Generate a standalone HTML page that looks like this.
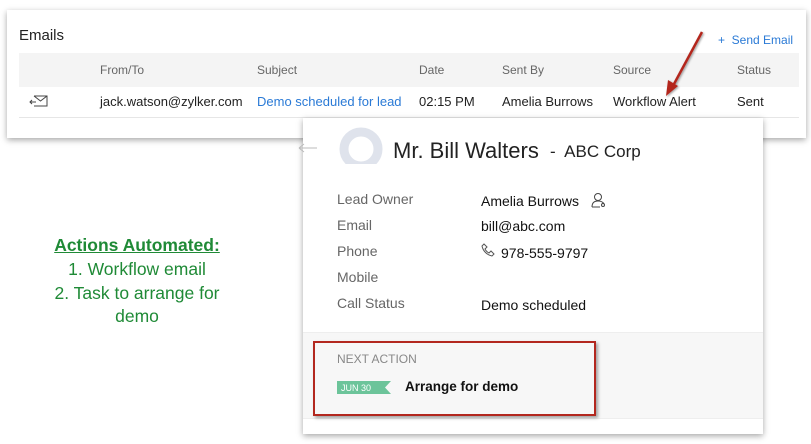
<!DOCTYPE html>
<html><head><meta charset="utf-8"><style>
*{margin:0;padding:0;box-sizing:border-box}
body{width:811px;height:444px;background:#fff;position:relative;overflow:hidden;font-family:"Liberation Sans",sans-serif;color:#222}
.abs{position:absolute;white-space:nowrap}
#card1{position:absolute;left:7px;top:10px;width:799px;height:128px;background:#fff;box-shadow:0 2px 6px rgba(0,0,0,.35)}
#card2{position:absolute;left:303px;top:118px;width:460px;height:316px;background:#fff;box-shadow:0 2px 6px rgba(0,0,0,.35)}
.hdr{font-size:12px;color:#666}
.cell{font-size:13px;color:#222}
.lbl{font-size:14px;color:#666}
.val{font-size:14px;color:#111}
.g{font-size:17.5px;color:#1f8a36;text-align:center;width:240px;left:17px}
</style></head><body>
<div id="card1">
  <div class="abs" style="left:12px;top:17px;font-size:15px;color:#222">Emails</div>
  <div class="abs" style="left:711px;top:23px;font-size:12px;color:#2a7ad6">+&nbsp; Send Email</div>
  <div class="abs" style="left:12px;top:43px;width:780px;height:34px;background:#f4f4f4"></div>
  <div class="abs" style="left:12px;top:107px;width:780px;height:1px;background:#e6e6e6"></div>
  <div class="abs hdr" style="left:93px;top:53px">From/To</div>
  <div class="abs hdr" style="left:250px;top:53px">Subject</div>
  <div class="abs hdr" style="left:412px;top:53px">Date</div>
  <div class="abs hdr" style="left:495px;top:53px">Sent By</div>
  <div class="abs hdr" style="left:606px;top:53px">Source</div>
  <div class="abs hdr" style="left:730px;top:53px">Status</div>
  <svg class="abs" style="left:22px;top:85px" width="20" height="13" viewBox="0 0 20 13"><path d="M5 1h13v10H5M5 1l6.5 5L18 1M1 7h6M3 5L1 7l2 2" fill="none" stroke="#444" stroke-width="1"/></svg>
  <div class="abs cell" style="left:93px;top:84px">jack.watson@zylker.com</div>
  <div class="abs cell" style="left:250px;top:84px;color:#2a7ad6">Demo scheduled for lead</div>
  <div class="abs cell" style="left:412px;top:84px">02:15 PM</div>
  <div class="abs cell" style="left:495px;top:84px">Amelia Burrows</div>
  <div class="abs cell" style="left:606px;top:84px">Workflow Alert</div>
  <div class="abs cell" style="left:730px;top:84px">Sent</div>
</div>
<svg class="abs" style="left:0;top:0" width="811" height="444"><defs><filter id="s"><feDropShadow dx="1" dy="1" stdDeviation="1" flood-opacity=".4"/></filter></defs>
<g filter="url(#s)"><line x1="702" y1="32" x2="674" y2="84" stroke="#b3281f" stroke-width="2.5"/><path d="M666 96l2-16 10 6z" fill="#b3281f"/></g></svg>
<div id="card2">
  <svg class="abs" style="left:-6px;top:24px" width="22" height="12"><path d="M2 6h18M2 6l5-4M2 6l5 4" stroke="#bbb" fill="none"/></svg>
  <svg class="abs" style="left:35px;top:8px" width="46" height="38"><circle cx="23" cy="23" r="17" fill="none" stroke="#dfe3ec" stroke-width="9"/></svg>
  <div class="abs" style="left:90px;top:20px;font-size:22px;color:#222">Mr. Bill Walters</div>
  <div class="abs" style="left:247px;top:24px;font-size:17px;color:#222">-&nbsp; ABC Corp</div>
  <div class="abs lbl" style="left:34px;top:73px">Lead Owner</div>
  <div class="abs lbl" style="left:34px;top:99px">Email</div>
  <div class="abs lbl" style="left:34px;top:125px">Phone</div>
  <div class="abs lbl" style="left:34px;top:151px">Mobile</div>
  <div class="abs lbl" style="left:34px;top:177px">Call Status</div>
  <div class="abs val" style="left:178px;top:75px">Amelia Burrows</div>
  <svg class="abs" style="left:288px;top:74px" width="16" height="16"><circle cx="7" cy="5" r="3.5" fill="none" stroke="#444"/><path d="M1 15c0-5 3-6 6-6s5 1 6 3M1 15h8" fill="none" stroke="#444"/><circle cx="12" cy="13" r="1.5" fill="none" stroke="#444"/></svg>
  <div class="abs val" style="left:178px;top:100px">bill@abc.com</div>
  <svg class="abs" style="left:178px;top:125px" width="14" height="14"><path d="M3 1l3 3-2 2c1 2 2 3 4 4l2-2 3 3-2 2C6 12 2 8 1 3z" fill="none" stroke="#555"/></svg>
  <div class="abs val" style="left:198px;top:127px">978-555-9797</div>
  <div class="abs val" style="left:178px;top:179px">Demo scheduled</div>
  <div class="abs" style="left:0;top:214px;width:460px;height:87px;background:#f7f7f7;border-top:1px solid #eee;border-bottom:1px solid #eee"></div>
  <div class="abs" style="left:10px;top:223px;width:283px;height:75px;border:2px solid #b3281f;box-shadow:2px 2px 3px rgba(0,0,0,.35)"></div>
  <div class="abs" style="left:34px;top:234px;font-size:12px;color:#888">NEXT ACTION</div>
  <svg class="abs" style="left:34px;top:263px" width="54" height="13"><path d="M0 0h54l-6 6.5 6 6.5H0z" fill="#6cc49a"/><text x="4" y="10" font-size="9" fill="#fff" font-family="Liberation Sans">JUN 30</text></svg>
  <div class="abs" style="left:102px;top:261px;font-size:13.5px;font-weight:bold;color:#111">Arrange for demo</div>
</div>
<div class="abs g" style="top:235px;font-weight:bold;text-decoration:underline">Actions Automated:</div>
<div class="abs g" style="top:259px">1. Workflow email</div>
<div class="abs g" style="top:283px">2. Task to arrange for</div>
<div class="abs g" style="top:306px">demo</div>
</body></html>
